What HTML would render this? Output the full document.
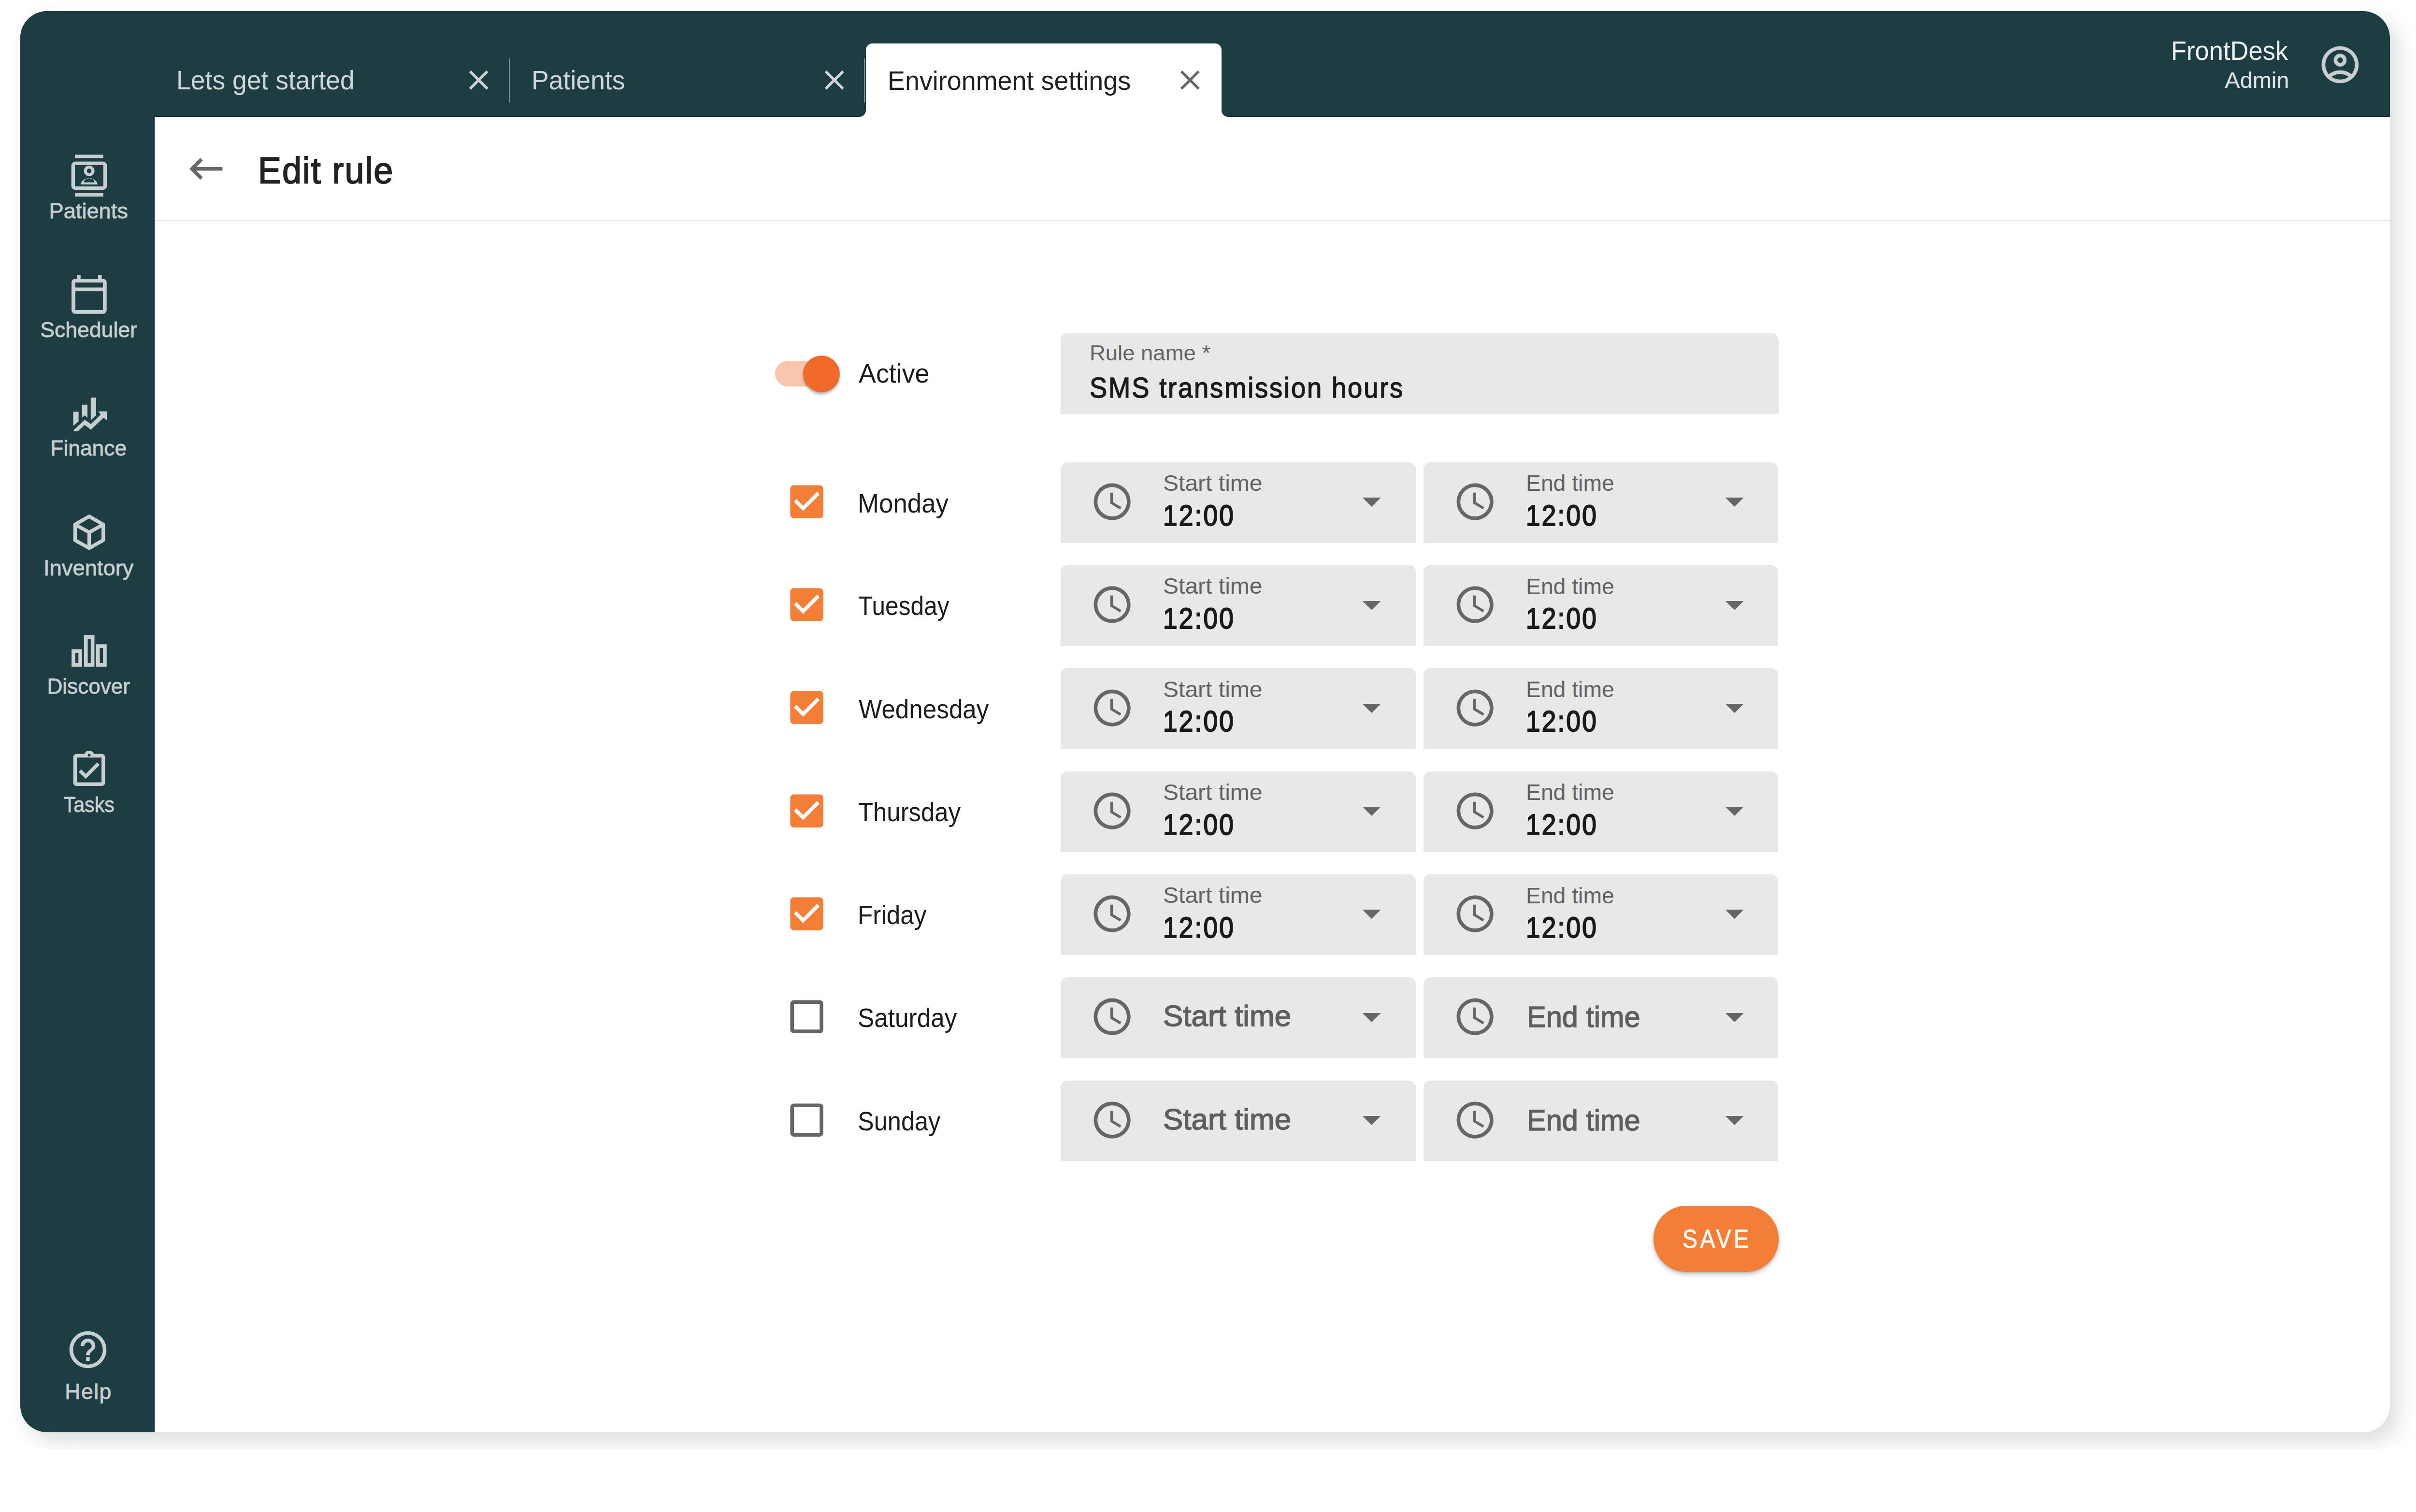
<!DOCTYPE html>
<html><head><meta charset="utf-8"><title>Edit rule</title>
<style>
html,body{margin:0;padding:0;}
body{width:5218px;height:3130px;position:relative;overflow:hidden;background:#ffffff;font-family:"Liberation Sans",sans-serif;}
</style></head><body>
<div style="position:absolute;left:44px;top:24px;width:5118px;height:3070px;border-radius:58px;background:#fff;box-shadow:18px 20px 46px rgba(30,45,50,0.15);overflow:hidden"><div style="position:absolute;left:0;top:0;width:5118px;height:229px;background:#1e3d43"></div><div style="position:absolute;left:0;top:0;width:290px;height:3070px;background:#1e3d43"></div><div style="position:absolute;left:288px;top:227px;width:2px;height:2843px;background:#0d3136"></div><div style="position:absolute;left:288px;top:227px;width:4830px;height:2px;background:#0d3136"></div></div>
<div style="position:absolute;left:1870px;top:94px;width:768px;height:160px;background:#fff;border-radius:14px 14px 0 0"></div>
<div style="position:absolute;left:1855px;top:238px;width:15px;height:15px;background:#fff"><div style="width:15px;height:15px;background:#1e3d43;border-bottom-right-radius:15px"></div></div>
<div style="position:absolute;left:2638px;top:238px;width:15px;height:15px;background:#fff"><div style="width:15px;height:15px;background:#1e3d43;border-bottom-left-radius:15px"></div></div>
<div style="position:absolute;left:1098.5px;top:126px;width:3px;height:95px;background:#7f9396"></div>
<div style="position:absolute;left:1865.5px;top:126px;width:3px;height:95px;background:#7f9396"></div>
<div style="position:absolute;top:139.5px;font-size:58px;color:#cfd6d7;font-weight:400;letter-spacing:0.00px;line-height:normal;white-space:pre;transform:scaleX(0.9630);transform-origin:0 0;left:380.7px;">Lets get started</div>
<div style="position:absolute;top:139.7px;font-size:58px;color:#cfd6d7;font-weight:400;letter-spacing:0.00px;line-height:normal;white-space:pre;transform:scaleX(0.9645);transform-origin:0 0;left:1148.1px;">Patients</div>
<div style="position:absolute;top:140.6px;font-size:58px;color:#1f1f1f;font-weight:400;letter-spacing:0.00px;line-height:normal;white-space:pre;transform:scaleX(0.9698);transform-origin:0 0;left:1917.1px;">Environment settings</div>
<svg style="position:absolute;left:1004px;top:142.8px" width="60" height="60" viewBox="1004 142.8 60 60"><path d="M1015.2 154.0L1052.8 191.60000000000002M1052.8 154.0L1015.2 191.60000000000002" stroke="#cfd6d7" stroke-width="5.6" fill="none"/></svg>
<svg style="position:absolute;left:1772px;top:142.8px" width="60" height="60" viewBox="1772 142.8 60 60"><path d="M1783.2 154.0L1820.8 191.60000000000002M1820.8 154.0L1783.2 191.60000000000002" stroke="#cfd6d7" stroke-width="5.6" fill="none"/></svg>
<svg style="position:absolute;left:2539.8px;top:142.8px" width="60" height="60" viewBox="2539.8 142.8 60 60"><path d="M2551.0 154.0L2588.6000000000004 191.60000000000002M2588.6000000000004 154.0L2551.0 191.60000000000002" stroke="#666666" stroke-width="5.6" fill="none"/></svg>
<div style="position:absolute;top:76.3px;font-size:58px;color:#eef1f1;font-weight:400;letter-spacing:0.00px;line-height:normal;white-space:pre;transform:scaleX(0.9452);transform-origin:100% 0;right:276.1px;text-align:right;">FrontDesk</div>
<div style="position:absolute;top:145.4px;font-size:48px;color:#e2e6e6;font-weight:400;letter-spacing:0.00px;line-height:normal;white-space:pre;transform:scaleX(1.0202);transform-origin:100% 0;right:274.3px;text-align:right;">Admin</div>
<svg style="position:absolute;left:5006px;top:92.3px" width="96" height="96" viewBox="0 0 24 24"><path fill="#c7cecf" d="M12 2C6.48 2 2 6.48 2 12s4.48 10 10 10 10-4.48 10-10S17.52 2 12 2zM7.35 18.5C8.66 17.56 10.26 17 12 17s3.34.56 4.65 1.5c-1.31.94-2.91 1.5-4.65 1.5s-3.34-.56-4.65-1.5zm10.79-1.38C16.45 15.8 14.32 15 12 15s-4.45.8-6.14 2.12C4.7 15.73 4 13.95 4 12c0-4.42 3.58-8 8-8s8 3.58 8 8c0 1.95-.7 3.73-1.86 5.12zM12 6c-1.93 0-3.5 1.57-3.5 3.5S10.07 13 12 13s3.5-1.57 3.5-3.5S13.93 6 12 6zm0 5c-.83 0-1.5-.67-1.5-1.5S11.17 8 12 8s1.5.67 1.5 1.5S12.83 11 12 11z"/></svg>
<svg style="position:absolute;left:0;top:0" width="334" height="3130" viewBox="0 0 334 3130" fill="none" stroke="#c7cecf">
<!-- patients -->
<rect x="162" y="334" width="61" height="7.5" fill="#c7cecf" stroke="none"/>
<rect x="162" y="417" width="61" height="7.5" fill="#c7cecf" stroke="none"/>
<rect x="157.9" y="352.8" width="69.2" height="53.6" rx="5" stroke-width="7.7"/>
<circle cx="192.6" cy="369.2" r="8.2" stroke-width="6.5"/>
<path d="M174.5 398.3 A18.2 15 0 0 1 210.7 398.3 Z" fill="#c7cecf" stroke="none"/>
<path d="M181 394 A11.5 8.5 0 0 1 204.3 394 Z" fill="#1e3d43" stroke="none"/>
<!-- scheduler -->
<rect x="158.6" y="606.1" width="67.7" height="68" rx="4" stroke-width="8.15"/>
<line x1="158" y1="625.2" x2="227" y2="625.2" stroke-width="8.2"/>
<rect x="166.3" y="594" width="7.8" height="12" fill="#c7cecf" stroke="none"/>
<rect x="211.9" y="594" width="7.8" height="12" fill="#c7cecf" stroke="none"/>
<!-- finance -->
<g fill="#c7cecf" stroke="none">
<polygon points="158.2,889.5 169.7,889.5 169.7,910.4 158.2,919.8"/>
<polygon points="177.1,874.3 188.9,874.3 188.9,902.3 182.9,897.3 177.1,902.3"/>
<polygon points="196,858.8 207.4,858.8 207.4,897.6 196,907.7"/>
<polygon points="212.5,888.8 230.7,888.8 230.7,907.7"/>
</g>
<polygon points="159.2,931.3 168.3,931.3 183.1,918 196.3,928.2 223.6,902.3 230.7,907.7 230.7,888.8 212.5,888.8 217.6,895.6 196.3,916.1 183.1,906.8 159.2,929" fill="#c7cecf" stroke="none"/>
<!-- inventory -->
<path d="M192.6 1115.5 L223 1133 L223 1167 L192.6 1184.2 L162.1 1167 L162.1 1133 Z M162.1 1133 L192.6 1150 L223 1133 M192.6 1150 L192.6 1184" stroke-width="7.75" stroke-linejoin="round"/>
<!-- discover -->
<rect x="158.6" y="1406.8" width="14.7" height="29.6" stroke-width="8"/>
<rect x="185.5" y="1376.4" width="14.5" height="60" stroke-width="8"/>
<rect x="211.6" y="1395.8" width="14.8" height="40.6" stroke-width="8"/>
<!-- tasks -->
<rect x="162.1" y="1632.8" width="61" height="61.3" rx="3" stroke-width="7.75"/>
<path d="M181.6 1630.5 A11.3 11.3 0 0 1 203.6 1630.5 Z" fill="#c7cecf" stroke="none"/>
<circle cx="192.6" cy="1631.5" r="3" fill="#1e3d43" stroke="none"/>
<polyline points="172.7,1664.9 185.2,1677.2 212.5,1649.8" stroke-width="7.75" stroke-linejoin="miter"/>
</svg>
<svg style="position:absolute;left:142px;top:2868.2px" width="96" height="96" viewBox="0 0 24 24"><path fill="#c7cecf" d="M11 18h2v-2h-2v2zm1-16C6.48 2 2 6.48 2 12s4.48 10 10 10 10-4.48 10-10S17.52 2 12 2zm0 18c-4.41 0-8-3.59-8-8s3.59-8 8-8 8 3.59 8 8-3.59 8-8 8zm0-14c-2.21 0-4 1.79-4 4h2c0-1.1.9-2 2-2s2 .9 2 2c0 2-3 1.75-3 5h2c0-2.25 3-2.5 3-5 0-2.21-1.79-4-4-4z"/></svg>
<div style="position:absolute;top:430.3px;font-size:46.5px;color:#c7cecf;font-weight:400;letter-spacing:0.00px;line-height:normal;white-space:pre;-webkit-text-stroke:0.8px #c7cecf;transform:scaleX(1.0139);transform-origin:50% 0;left:-808.4px;width:2000px;text-align:center;">Patients</div>
<div style="position:absolute;top:686.6px;font-size:46.5px;color:#c7cecf;font-weight:400;letter-spacing:0.00px;line-height:normal;white-space:pre;-webkit-text-stroke:0.8px #c7cecf;left:-808.4px;width:2000px;text-align:center;">Scheduler</div>
<div style="position:absolute;top:942.1px;font-size:46.5px;color:#c7cecf;font-weight:400;letter-spacing:0.00px;line-height:normal;white-space:pre;-webkit-text-stroke:0.8px #c7cecf;transform:scaleX(0.9961);transform-origin:50% 0;left:-808.4px;width:2000px;text-align:center;">Finance</div>
<div style="position:absolute;top:1200.8px;font-size:46.5px;color:#c7cecf;font-weight:400;letter-spacing:0.00px;line-height:normal;white-space:pre;-webkit-text-stroke:0.8px #c7cecf;transform:scaleX(1.0171);transform-origin:50% 0;left:-809.0px;width:2000px;text-align:center;">Inventory</div>
<div style="position:absolute;top:1457.2px;font-size:46.5px;color:#c7cecf;font-weight:400;letter-spacing:0.00px;line-height:normal;white-space:pre;-webkit-text-stroke:0.8px #c7cecf;transform:scaleX(0.9896);transform-origin:50% 0;left:-808.3px;width:2000px;text-align:center;">Discover</div>
<div style="position:absolute;top:1712.7px;font-size:46.5px;color:#c7cecf;font-weight:400;letter-spacing:0.00px;line-height:normal;white-space:pre;-webkit-text-stroke:0.8px #c7cecf;transform:scaleX(0.9248);transform-origin:50% 0;left:-807.6px;width:2000px;text-align:center;">Tasks</div>
<div style="position:absolute;top:2980.9px;font-size:46.5px;color:#c7cecf;font-weight:400;letter-spacing:1.50px;line-height:normal;white-space:pre;-webkit-text-stroke:0.8px #c7cecf;left:-809.0px;width:2000px;text-align:center;">Help</div>
<svg style="position:absolute;left:400px;top:330px" width="90" height="70" viewBox="400 330 90 70"><path d="M435.6 344.2 L414.8 365 L435.6 385.8 M414 365 L480.7 365" stroke="#666666" stroke-width="7.8" fill="none" stroke-linejoin="miter"/></svg>
<div style="position:absolute;top:322.2px;font-size:79px;color:#222222;font-weight:400;letter-spacing:2.14px;line-height:normal;white-space:pre;-webkit-text-stroke:2.0px #222222;transform:scaleX(0.9500);transform-origin:0 0;left:557.8px;">Edit rule</div>
<div style="position:absolute;left:334px;top:475px;width:4828px;height:3px;background:#e6e6e6"></div>
<div style="position:absolute;left:1674px;top:780px;width:136px;height:55px;border-radius:28px;background:#f8c6ae"></div>
<div style="position:absolute;left:1734px;top:767.6px;width:79.5px;height:79.5px;border-radius:50%;background:#f06b2a;box-shadow:0 6px 6px rgba(0,0,0,0.2),0 2px 3px rgba(0,0,0,0.14)"></div>
<div style="position:absolute;top:773.1px;font-size:58px;color:#1c1c1c;font-weight:400;letter-spacing:0.00px;line-height:normal;white-space:pre;transform:scaleX(0.9682);transform-origin:0 0;left:1854.2px;">Active</div>
<div style="position:absolute;left:2290.7px;top:720.4px;width:1550.3px;height:173.8px;background:#e8e8e8;border-radius:15px 15px 0 0"></div>
<div style="position:absolute;top:736.4px;font-size:46.5px;color:#636363;font-weight:400;letter-spacing:0.00px;line-height:normal;white-space:pre;transform:scaleX(1.0201);transform-origin:0 0;left:2352.9px;">Rule name *</div>
<div style="position:absolute;top:802.4px;font-size:61px;color:#1b1b1b;font-weight:400;letter-spacing:3.17px;line-height:normal;white-space:pre;-webkit-text-stroke:1.5px #1b1b1b;transform:scaleX(0.9300);transform-origin:0 0;left:2353.7px;">SMS transmission hours</div>
<svg style="position:absolute;left:1694.3px;top:1036.0px" width="95.3" height="95.3" viewBox="0 0 24 24"><path fill="#f37e37" d="M19 3H5c-1.11 0-2 .9-2 2v14c0 1.1.89 2 2 2h14c1.11 0 2-.9 2-2V5c0-1.1-.89-2-2-2zm-9 14l-5-5 1.41-1.41L10 14.17l7.59-7.59L19 8l-9 9z"/></svg>
<div style="position:absolute;top:1053.7px;font-size:57.5px;color:#1c1c1c;font-weight:400;letter-spacing:0.00px;line-height:normal;white-space:pre;transform:scaleX(0.9595);transform-origin:0 0;left:1852.0px;">Monday</div>
<div style="position:absolute;left:2290.8px;top:998.5px;width:766.7px;height:174.5px;background:#e8e8e8;border-radius:15px 15px 0 0"></div>
<svg style="position:absolute;left:2354.3px;top:1036.2px" width="95.3" height="95.3" viewBox="0 0 24 24"><path fill="#666666" d="M11.99 2C6.47 2 2 6.48 2 12s4.47 10 9.99 10C17.52 22 22 17.52 22 12S17.52 2 11.99 2zM12 20c-4.42 0-8-3.58-8-8s3.58-8 8-8 8 3.58 8 8-3.58 8-8 8zm.5-13H11v6l5.25 3.15.75-1.23-4.5-2.67z"/></svg>
<svg style="position:absolute;left:2914.8px;top:1035.5px" width="95.3" height="95.3" viewBox="0 0 24 24"><path fill="#666666" d="M7 10l5 5 5-5z"/></svg>
<div style="position:absolute;top:1015.4px;font-size:48.5px;color:#616161;font-weight:400;letter-spacing:0.00px;line-height:normal;white-space:pre;transform:scaleX(1.0337);transform-origin:0 0;left:2512.0px;">Start time</div>
<div style="position:absolute;top:1076.8px;font-size:63px;color:#1b1b1b;font-weight:400;letter-spacing:3.82px;line-height:normal;white-space:pre;-webkit-text-stroke:2.3px #1b1b1b;transform:scaleX(0.8800);transform-origin:0 0;left:2511.8px;">12:00</div>
<div style="position:absolute;left:3074.2000000000003px;top:998.5px;width:766.7px;height:174.5px;background:#e8e8e8;border-radius:15px 15px 0 0"></div>
<svg style="position:absolute;left:3137.7px;top:1036.2px" width="95.3" height="95.3" viewBox="0 0 24 24"><path fill="#666666" d="M11.99 2C6.47 2 2 6.48 2 12s4.47 10 9.99 10C17.52 22 22 17.52 22 12S17.52 2 11.99 2zM12 20c-4.42 0-8-3.58-8-8s3.58-8 8-8 8 3.58 8 8-3.58 8-8 8zm.5-13H11v6l5.25 3.15.75-1.23-4.5-2.67z"/></svg>
<svg style="position:absolute;left:3698.2px;top:1035.5px" width="95.3" height="95.3" viewBox="0 0 24 24"><path fill="#666666" d="M7 10l5 5 5-5z"/></svg>
<div style="position:absolute;top:1015.9px;font-size:48.5px;color:#616161;font-weight:400;letter-spacing:0.00px;line-height:normal;white-space:pre;transform:scaleX(0.9962);transform-origin:0 0;left:3296.1px;">End time</div>
<div style="position:absolute;top:1076.8px;font-size:63px;color:#1b1b1b;font-weight:400;letter-spacing:3.82px;line-height:normal;white-space:pre;-webkit-text-stroke:2.3px #1b1b1b;transform:scaleX(0.8800);transform-origin:0 0;left:3295.2px;">12:00</div>
<svg style="position:absolute;left:1694.3px;top:1258.6px" width="95.3" height="95.3" viewBox="0 0 24 24"><path fill="#f37e37" d="M19 3H5c-1.11 0-2 .9-2 2v14c0 1.1.89 2 2 2h14c1.11 0 2-.9 2-2V5c0-1.1-.89-2-2-2zm-9 14l-5-5 1.41-1.41L10 14.17l7.59-7.59L19 8l-9 9z"/></svg>
<div style="position:absolute;top:1275.3px;font-size:57.5px;color:#1c1c1c;font-weight:400;letter-spacing:0.00px;line-height:normal;white-space:pre;transform:scaleX(0.9016);transform-origin:0 0;left:1853.1px;">Tuesday</div>
<div style="position:absolute;left:2290.8px;top:1221.1px;width:766.7px;height:174.5px;background:#e8e8e8;border-radius:15px 15px 0 0"></div>
<svg style="position:absolute;left:2354.3px;top:1258.8px" width="95.3" height="95.3" viewBox="0 0 24 24"><path fill="#666666" d="M11.99 2C6.47 2 2 6.48 2 12s4.47 10 9.99 10C17.52 22 22 17.52 22 12S17.52 2 11.99 2zM12 20c-4.42 0-8-3.58-8-8s3.58-8 8-8 8 3.58 8 8-3.58 8-8 8zm.5-13H11v6l5.25 3.15.75-1.23-4.5-2.67z"/></svg>
<svg style="position:absolute;left:2914.8px;top:1258.1px" width="95.3" height="95.3" viewBox="0 0 24 24"><path fill="#666666" d="M7 10l5 5 5-5z"/></svg>
<div style="position:absolute;top:1238.0px;font-size:48.5px;color:#616161;font-weight:400;letter-spacing:0.00px;line-height:normal;white-space:pre;transform:scaleX(1.0337);transform-origin:0 0;left:2512.0px;">Start time</div>
<div style="position:absolute;top:1299.4px;font-size:63px;color:#1b1b1b;font-weight:400;letter-spacing:3.82px;line-height:normal;white-space:pre;-webkit-text-stroke:2.3px #1b1b1b;transform:scaleX(0.8800);transform-origin:0 0;left:2511.8px;">12:00</div>
<div style="position:absolute;left:3074.2000000000003px;top:1221.1px;width:766.7px;height:174.5px;background:#e8e8e8;border-radius:15px 15px 0 0"></div>
<svg style="position:absolute;left:3137.7px;top:1258.8px" width="95.3" height="95.3" viewBox="0 0 24 24"><path fill="#666666" d="M11.99 2C6.47 2 2 6.48 2 12s4.47 10 9.99 10C17.52 22 22 17.52 22 12S17.52 2 11.99 2zM12 20c-4.42 0-8-3.58-8-8s3.58-8 8-8 8 3.58 8 8-3.58 8-8 8zm.5-13H11v6l5.25 3.15.75-1.23-4.5-2.67z"/></svg>
<svg style="position:absolute;left:3698.2px;top:1258.1px" width="95.3" height="95.3" viewBox="0 0 24 24"><path fill="#666666" d="M7 10l5 5 5-5z"/></svg>
<div style="position:absolute;top:1238.5px;font-size:48.5px;color:#616161;font-weight:400;letter-spacing:0.00px;line-height:normal;white-space:pre;transform:scaleX(0.9962);transform-origin:0 0;left:3296.1px;">End time</div>
<div style="position:absolute;top:1299.4px;font-size:63px;color:#1b1b1b;font-weight:400;letter-spacing:3.82px;line-height:normal;white-space:pre;-webkit-text-stroke:2.3px #1b1b1b;transform:scaleX(0.8800);transform-origin:0 0;left:3295.2px;">12:00</div>
<svg style="position:absolute;left:1694.3px;top:1481.2px" width="95.3" height="95.3" viewBox="0 0 24 24"><path fill="#f37e37" d="M19 3H5c-1.11 0-2 .9-2 2v14c0 1.1.89 2 2 2h14c1.11 0 2-.9 2-2V5c0-1.1-.89-2-2-2zm-9 14l-5-5 1.41-1.41L10 14.17l7.59-7.59L19 8l-9 9z"/></svg>
<div style="position:absolute;top:1498.6px;font-size:57.5px;color:#1c1c1c;font-weight:400;letter-spacing:0.00px;line-height:normal;white-space:pre;transform:scaleX(0.9295);transform-origin:0 0;left:1854.6px;">Wednesday</div>
<div style="position:absolute;left:2290.8px;top:1443.7px;width:766.7px;height:174.5px;background:#e8e8e8;border-radius:15px 15px 0 0"></div>
<svg style="position:absolute;left:2354.3px;top:1481.4px" width="95.3" height="95.3" viewBox="0 0 24 24"><path fill="#666666" d="M11.99 2C6.47 2 2 6.48 2 12s4.47 10 9.99 10C17.52 22 22 17.52 22 12S17.52 2 11.99 2zM12 20c-4.42 0-8-3.58-8-8s3.58-8 8-8 8 3.58 8 8-3.58 8-8 8zm.5-13H11v6l5.25 3.15.75-1.23-4.5-2.67z"/></svg>
<svg style="position:absolute;left:2914.8px;top:1480.7px" width="95.3" height="95.3" viewBox="0 0 24 24"><path fill="#666666" d="M7 10l5 5 5-5z"/></svg>
<div style="position:absolute;top:1460.6px;font-size:48.5px;color:#616161;font-weight:400;letter-spacing:0.00px;line-height:normal;white-space:pre;transform:scaleX(1.0337);transform-origin:0 0;left:2512.0px;">Start time</div>
<div style="position:absolute;top:1522.0px;font-size:63px;color:#1b1b1b;font-weight:400;letter-spacing:3.82px;line-height:normal;white-space:pre;-webkit-text-stroke:2.3px #1b1b1b;transform:scaleX(0.8800);transform-origin:0 0;left:2511.8px;">12:00</div>
<div style="position:absolute;left:3074.2000000000003px;top:1443.7px;width:766.7px;height:174.5px;background:#e8e8e8;border-radius:15px 15px 0 0"></div>
<svg style="position:absolute;left:3137.7px;top:1481.4px" width="95.3" height="95.3" viewBox="0 0 24 24"><path fill="#666666" d="M11.99 2C6.47 2 2 6.48 2 12s4.47 10 9.99 10C17.52 22 22 17.52 22 12S17.52 2 11.99 2zM12 20c-4.42 0-8-3.58-8-8s3.58-8 8-8 8 3.58 8 8-3.58 8-8 8zm.5-13H11v6l5.25 3.15.75-1.23-4.5-2.67z"/></svg>
<svg style="position:absolute;left:3698.2px;top:1480.7px" width="95.3" height="95.3" viewBox="0 0 24 24"><path fill="#666666" d="M7 10l5 5 5-5z"/></svg>
<div style="position:absolute;top:1461.1px;font-size:48.5px;color:#616161;font-weight:400;letter-spacing:0.00px;line-height:normal;white-space:pre;transform:scaleX(0.9962);transform-origin:0 0;left:3296.1px;">End time</div>
<div style="position:absolute;top:1522.0px;font-size:63px;color:#1b1b1b;font-weight:400;letter-spacing:3.82px;line-height:normal;white-space:pre;-webkit-text-stroke:2.3px #1b1b1b;transform:scaleX(0.8800);transform-origin:0 0;left:3295.2px;">12:00</div>
<svg style="position:absolute;left:1694.3px;top:1703.8px" width="95.3" height="95.3" viewBox="0 0 24 24"><path fill="#f37e37" d="M19 3H5c-1.11 0-2 .9-2 2v14c0 1.1.89 2 2 2h14c1.11 0 2-.9 2-2V5c0-1.1-.89-2-2-2zm-9 14l-5-5 1.41-1.41L10 14.17l7.59-7.59L19 8l-9 9z"/></svg>
<div style="position:absolute;top:1720.4px;font-size:57.5px;color:#1c1c1c;font-weight:400;letter-spacing:0.00px;line-height:normal;white-space:pre;transform:scaleX(0.9237);transform-origin:0 0;left:1853.1px;">Thursday</div>
<div style="position:absolute;left:2290.8px;top:1666.3px;width:766.7px;height:174.5px;background:#e8e8e8;border-radius:15px 15px 0 0"></div>
<svg style="position:absolute;left:2354.3px;top:1704.0px" width="95.3" height="95.3" viewBox="0 0 24 24"><path fill="#666666" d="M11.99 2C6.47 2 2 6.48 2 12s4.47 10 9.99 10C17.52 22 22 17.52 22 12S17.52 2 11.99 2zM12 20c-4.42 0-8-3.58-8-8s3.58-8 8-8 8 3.58 8 8-3.58 8-8 8zm.5-13H11v6l5.25 3.15.75-1.23-4.5-2.67z"/></svg>
<svg style="position:absolute;left:2914.8px;top:1703.3px" width="95.3" height="95.3" viewBox="0 0 24 24"><path fill="#666666" d="M7 10l5 5 5-5z"/></svg>
<div style="position:absolute;top:1683.2px;font-size:48.5px;color:#616161;font-weight:400;letter-spacing:0.00px;line-height:normal;white-space:pre;transform:scaleX(1.0337);transform-origin:0 0;left:2512.0px;">Start time</div>
<div style="position:absolute;top:1744.6px;font-size:63px;color:#1b1b1b;font-weight:400;letter-spacing:3.82px;line-height:normal;white-space:pre;-webkit-text-stroke:2.3px #1b1b1b;transform:scaleX(0.8800);transform-origin:0 0;left:2511.8px;">12:00</div>
<div style="position:absolute;left:3074.2000000000003px;top:1666.3px;width:766.7px;height:174.5px;background:#e8e8e8;border-radius:15px 15px 0 0"></div>
<svg style="position:absolute;left:3137.7px;top:1704.0px" width="95.3" height="95.3" viewBox="0 0 24 24"><path fill="#666666" d="M11.99 2C6.47 2 2 6.48 2 12s4.47 10 9.99 10C17.52 22 22 17.52 22 12S17.52 2 11.99 2zM12 20c-4.42 0-8-3.58-8-8s3.58-8 8-8 8 3.58 8 8-3.58 8-8 8zm.5-13H11v6l5.25 3.15.75-1.23-4.5-2.67z"/></svg>
<svg style="position:absolute;left:3698.2px;top:1703.3px" width="95.3" height="95.3" viewBox="0 0 24 24"><path fill="#666666" d="M7 10l5 5 5-5z"/></svg>
<div style="position:absolute;top:1683.7px;font-size:48.5px;color:#616161;font-weight:400;letter-spacing:0.00px;line-height:normal;white-space:pre;transform:scaleX(0.9962);transform-origin:0 0;left:3296.1px;">End time</div>
<div style="position:absolute;top:1744.6px;font-size:63px;color:#1b1b1b;font-weight:400;letter-spacing:3.82px;line-height:normal;white-space:pre;-webkit-text-stroke:2.3px #1b1b1b;transform:scaleX(0.8800);transform-origin:0 0;left:3295.2px;">12:00</div>
<svg style="position:absolute;left:1694.3px;top:1926.5px" width="95.3" height="95.3" viewBox="0 0 24 24"><path fill="#f37e37" d="M19 3H5c-1.11 0-2 .9-2 2v14c0 1.1.89 2 2 2h14c1.11 0 2-.9 2-2V5c0-1.1-.89-2-2-2zm-9 14l-5-5 1.41-1.41L10 14.17l7.59-7.59L19 8l-9 9z"/></svg>
<div style="position:absolute;top:1943.3px;font-size:57.5px;color:#1c1c1c;font-weight:400;letter-spacing:0.00px;line-height:normal;white-space:pre;transform:scaleX(0.9308);transform-origin:0 0;left:1852.5px;">Friday</div>
<div style="position:absolute;left:2290.8px;top:1888.9px;width:766.7px;height:174.5px;background:#e8e8e8;border-radius:15px 15px 0 0"></div>
<svg style="position:absolute;left:2354.3px;top:1926.6px" width="95.3" height="95.3" viewBox="0 0 24 24"><path fill="#666666" d="M11.99 2C6.47 2 2 6.48 2 12s4.47 10 9.99 10C17.52 22 22 17.52 22 12S17.52 2 11.99 2zM12 20c-4.42 0-8-3.58-8-8s3.58-8 8-8 8 3.58 8 8-3.58 8-8 8zm.5-13H11v6l5.25 3.15.75-1.23-4.5-2.67z"/></svg>
<svg style="position:absolute;left:2914.8px;top:1925.9px" width="95.3" height="95.3" viewBox="0 0 24 24"><path fill="#666666" d="M7 10l5 5 5-5z"/></svg>
<div style="position:absolute;top:1905.8px;font-size:48.5px;color:#616161;font-weight:400;letter-spacing:0.00px;line-height:normal;white-space:pre;transform:scaleX(1.0337);transform-origin:0 0;left:2512.0px;">Start time</div>
<div style="position:absolute;top:1967.2px;font-size:63px;color:#1b1b1b;font-weight:400;letter-spacing:3.82px;line-height:normal;white-space:pre;-webkit-text-stroke:2.3px #1b1b1b;transform:scaleX(0.8800);transform-origin:0 0;left:2511.8px;">12:00</div>
<div style="position:absolute;left:3074.2000000000003px;top:1888.9px;width:766.7px;height:174.5px;background:#e8e8e8;border-radius:15px 15px 0 0"></div>
<svg style="position:absolute;left:3137.7px;top:1926.6px" width="95.3" height="95.3" viewBox="0 0 24 24"><path fill="#666666" d="M11.99 2C6.47 2 2 6.48 2 12s4.47 10 9.99 10C17.52 22 22 17.52 22 12S17.52 2 11.99 2zM12 20c-4.42 0-8-3.58-8-8s3.58-8 8-8 8 3.58 8 8-3.58 8-8 8zm.5-13H11v6l5.25 3.15.75-1.23-4.5-2.67z"/></svg>
<svg style="position:absolute;left:3698.2px;top:1925.9px" width="95.3" height="95.3" viewBox="0 0 24 24"><path fill="#666666" d="M7 10l5 5 5-5z"/></svg>
<div style="position:absolute;top:1906.3px;font-size:48.5px;color:#616161;font-weight:400;letter-spacing:0.00px;line-height:normal;white-space:pre;transform:scaleX(0.9962);transform-origin:0 0;left:3296.1px;">End time</div>
<div style="position:absolute;top:1967.2px;font-size:63px;color:#1b1b1b;font-weight:400;letter-spacing:3.82px;line-height:normal;white-space:pre;-webkit-text-stroke:2.3px #1b1b1b;transform:scaleX(0.8800);transform-origin:0 0;left:3295.2px;">12:00</div>
<svg style="position:absolute;left:1694.3px;top:2149.1px" width="95.3" height="95.3" viewBox="0 0 24 24"><path fill="#666666" d="M19 5v14H5V5h14m0-2H5c-1.1 0-2 .9-2 2v14c0 1.1.9 2 2 2h14c1.1 0 2-.9 2-2V5c0-1.1-.9-2-2-2z"/></svg>
<div style="position:absolute;top:2165.7px;font-size:57.5px;color:#1c1c1c;font-weight:400;letter-spacing:0.00px;line-height:normal;white-space:pre;transform:scaleX(0.9321);transform-origin:0 0;left:1852.2px;">Saturday</div>
<div style="position:absolute;left:2290.8px;top:2111.5px;width:766.7px;height:174.5px;background:#e8e8e8;border-radius:15px 15px 0 0"></div>
<svg style="position:absolute;left:2354.3px;top:2149.2px" width="95.3" height="95.3" viewBox="0 0 24 24"><path fill="#666666" d="M11.99 2C6.47 2 2 6.48 2 12s4.47 10 9.99 10C17.52 22 22 17.52 22 12S17.52 2 11.99 2zM12 20c-4.42 0-8-3.58-8-8s3.58-8 8-8 8 3.58 8 8-3.58 8-8 8zm.5-13H11v6l5.25 3.15.75-1.23-4.5-2.67z"/></svg>
<svg style="position:absolute;left:2914.8px;top:2148.5px" width="95.3" height="95.3" viewBox="0 0 24 24"><path fill="#666666" d="M7 10l5 5 5-5z"/></svg>
<div style="position:absolute;top:2158.5px;font-size:63px;color:#5f5f5f;font-weight:400;letter-spacing:0.00px;line-height:normal;white-space:pre;-webkit-text-stroke:1.6px #5f5f5f;transform:scaleX(1.0269);transform-origin:0 0;left:2512.2px;">Start time</div>
<div style="position:absolute;left:3074.2000000000003px;top:2111.5px;width:766.7px;height:174.5px;background:#e8e8e8;border-radius:15px 15px 0 0"></div>
<svg style="position:absolute;left:3137.7px;top:2149.2px" width="95.3" height="95.3" viewBox="0 0 24 24"><path fill="#666666" d="M11.99 2C6.47 2 2 6.48 2 12s4.47 10 9.99 10C17.52 22 22 17.52 22 12S17.52 2 11.99 2zM12 20c-4.42 0-8-3.58-8-8s3.58-8 8-8 8 3.58 8 8-3.58 8-8 8zm.5-13H11v6l5.25 3.15.75-1.23-4.5-2.67z"/></svg>
<svg style="position:absolute;left:3698.2px;top:2148.5px" width="95.3" height="95.3" viewBox="0 0 24 24"><path fill="#666666" d="M7 10l5 5 5-5z"/></svg>
<div style="position:absolute;top:2160.5px;font-size:63px;color:#5f5f5f;font-weight:400;letter-spacing:0.00px;line-height:normal;white-space:pre;-webkit-text-stroke:1.6px #5f5f5f;transform:scaleX(0.9848);transform-origin:0 0;left:3297.3px;">End time</div>
<svg style="position:absolute;left:1694.3px;top:2371.7px" width="95.3" height="95.3" viewBox="0 0 24 24"><path fill="#666666" d="M19 5v14H5V5h14m0-2H5c-1.1 0-2 .9-2 2v14c0 1.1.9 2 2 2h14c1.1 0 2-.9 2-2V5c0-1.1-.9-2-2-2z"/></svg>
<div style="position:absolute;top:2388.7px;font-size:57.5px;color:#1c1c1c;font-weight:400;letter-spacing:0.00px;line-height:normal;white-space:pre;transform:scaleX(0.9172);transform-origin:0 0;left:1852.2px;">Sunday</div>
<div style="position:absolute;left:2290.8px;top:2334.1px;width:766.7px;height:174.5px;background:#e8e8e8;border-radius:15px 15px 0 0"></div>
<svg style="position:absolute;left:2354.3px;top:2371.8px" width="95.3" height="95.3" viewBox="0 0 24 24"><path fill="#666666" d="M11.99 2C6.47 2 2 6.48 2 12s4.47 10 9.99 10C17.52 22 22 17.52 22 12S17.52 2 11.99 2zM12 20c-4.42 0-8-3.58-8-8s3.58-8 8-8 8 3.58 8 8-3.58 8-8 8zm.5-13H11v6l5.25 3.15.75-1.23-4.5-2.67z"/></svg>
<svg style="position:absolute;left:2914.8px;top:2371.1px" width="95.3" height="95.3" viewBox="0 0 24 24"><path fill="#666666" d="M7 10l5 5 5-5z"/></svg>
<div style="position:absolute;top:2381.1px;font-size:63px;color:#5f5f5f;font-weight:400;letter-spacing:0.00px;line-height:normal;white-space:pre;-webkit-text-stroke:1.6px #5f5f5f;transform:scaleX(1.0269);transform-origin:0 0;left:2512.2px;">Start time</div>
<div style="position:absolute;left:3074.2000000000003px;top:2334.1px;width:766.7px;height:174.5px;background:#e8e8e8;border-radius:15px 15px 0 0"></div>
<svg style="position:absolute;left:3137.7px;top:2371.8px" width="95.3" height="95.3" viewBox="0 0 24 24"><path fill="#666666" d="M11.99 2C6.47 2 2 6.48 2 12s4.47 10 9.99 10C17.52 22 22 17.52 22 12S17.52 2 11.99 2zM12 20c-4.42 0-8-3.58-8-8s3.58-8 8-8 8 3.58 8 8-3.58 8-8 8zm.5-13H11v6l5.25 3.15.75-1.23-4.5-2.67z"/></svg>
<svg style="position:absolute;left:3698.2px;top:2371.1px" width="95.3" height="95.3" viewBox="0 0 24 24"><path fill="#666666" d="M7 10l5 5 5-5z"/></svg>
<div style="position:absolute;top:2383.1px;font-size:63px;color:#5f5f5f;font-weight:400;letter-spacing:0.00px;line-height:normal;white-space:pre;-webkit-text-stroke:1.6px #5f5f5f;transform:scaleX(0.9848);transform-origin:0 0;left:3297.3px;">End time</div>
<div style="position:absolute;left:3571px;top:2605.3px;width:270px;height:142.2px;border-radius:71px;background:#f37e37;box-shadow:0 6px 10px rgba(0,0,0,0.2),0 2px 4px rgba(0,0,0,0.14)"></div>
<div style="position:absolute;top:2643.9px;font-size:56.5px;color:#ffffff;font-weight:400;letter-spacing:6.57px;line-height:normal;white-space:pre;-webkit-text-stroke:0.9px #ffffff;transform:scaleX(0.8600);transform-origin:0 0;left:3633.7px;">SAVE</div>
<script>(function(){var w=window.innerWidth;if(w&&Math.abs(w-5218)>2){document.body.style.zoom=(w/5218);}})();</script>
</body></html>
